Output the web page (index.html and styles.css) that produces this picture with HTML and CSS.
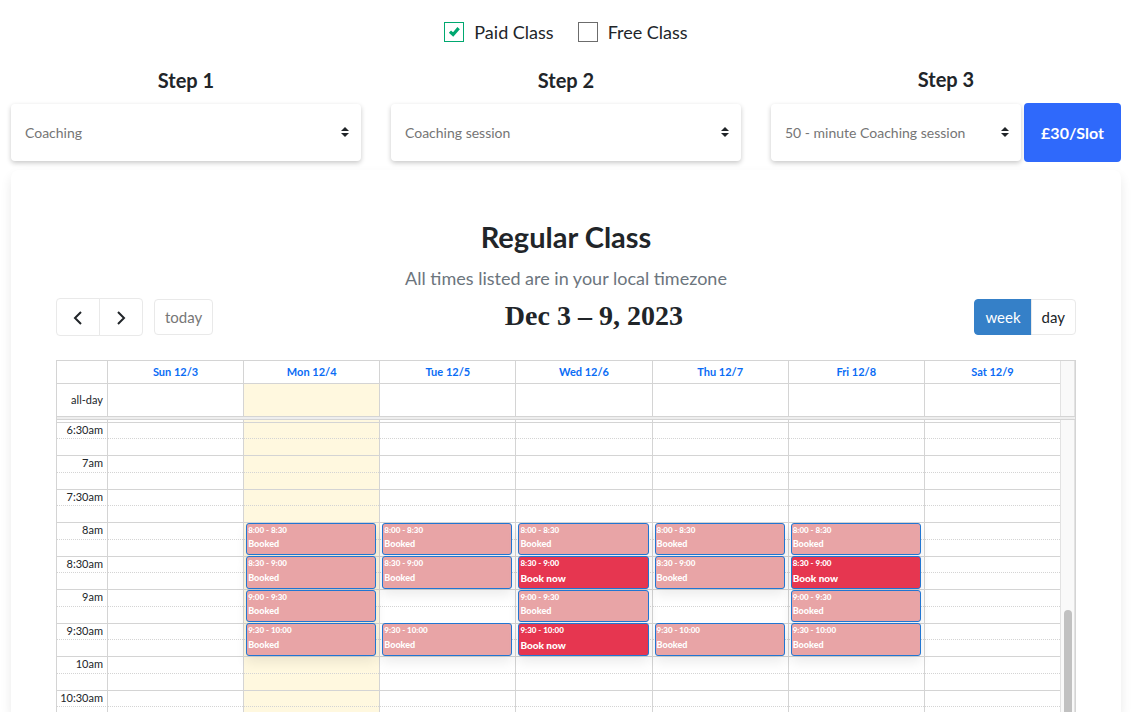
FILE: index.html
```html
<!DOCTYPE html>
<html lang="en">
<head>
<meta charset="utf-8">
<meta name="viewport" content="width=device-width, initial-scale=1">
<title>Regular Class</title>
<link rel="stylesheet" href="styles.css">
</head>
<body>
<form class="booking">
    <div class="class-type">
        <label><input type="checkbox" name="paid" checked>Paid Class</label>
        <label><input type="checkbox" name="free">Free Class</label>
    </div>
    <div class="steps">
        <div class="step">
            <label class="step-title" for="step1">Step 1</label>
            <div class="select-box">
                <select id="step1"><option>Coaching</option></select>
                <svg class="arrows" viewBox="0 0 8 10"><path d="M4 0 8 4H0zM4 10 0 6h8z"/></svg>
            </div>
        </div>
        <div class="step">
            <label class="step-title" for="step2">Step 2</label>
            <div class="select-box">
                <select id="step2"><option>Coaching session</option></select>
                <svg class="arrows" viewBox="0 0 8 10"><path d="M4 0 8 4H0zM4 10 0 6h8z"/></svg>
            </div>
        </div>
        <div class="step">
            <label class="step-title" for="step3">Step 3</label>
            <div class="step-row">
                <div class="select-box">
                    <select id="step3"><option>50 - minute Coaching session</option></select>
                    <svg class="arrows" viewBox="0 0 8 10"><path d="M4 0 8 4H0zM4 10 0 6h8z"/></svg>
                </div>
                <button type="button" class="price">£30/Slot</button>
            </div>
        </div>
    </div>
</form>
<main class="card">
    <h1>Regular Class</h1>
    <p class="note">All times listed are in your local timezone</p>
    <div class="toolbar">
        <div class="toolbar-left">
            <div class="nav-group">
                <button type="button" aria-label="prev"><svg viewBox="0 0 14 14"><path d="M10 1 4 7l6 6"/></svg></button>
                <button type="button" aria-label="next"><svg viewBox="0 0 14 14"><path d="M4 1l6 6-6 6"/></svg></button>
            </div>
            <button type="button" class="today-btn" disabled>today</button>
        </div>
        <h2>Dec 3 – 9, 2023</h2>
        <div class="view-group">
            <button type="button" class="active">week</button>
            <button type="button">day</button>
        </div>
    </div>
    <div class="calendar">
        <div class="pane">
            <table class="head">
                <tr>
                    <th class="axis"></th>
                    <th><a href="#sun">Sun 12/3</a></th>
                    <th><a href="#mon">Mon 12/4</a></th>
                    <th><a href="#tue">Tue 12/5</a></th>
                    <th><a href="#wed">Wed 12/6</a></th>
                    <th><a href="#thu">Thu 12/7</a></th>
                    <th><a href="#fri">Fri 12/8</a></th>
                    <th><a href="#sat">Sat 12/9</a></th>
                </tr>
                <tr class="all-day">
                    <td class="axis">all-day</td>
                    <td></td><td class="today"></td><td></td><td></td><td></td><td></td><td></td>
                </tr>
            </table>
            <div class="gutter"></div>
        </div>
        <div class="divider"></div>
        <div class="pane scroller">
            <table class="slots">
                <thead>
                    <tr>
                        <td class="axis"></td>
                        <td></td><td class="today"></td><td></td><td></td><td></td><td></td><td></td>
                    </tr>
                </thead>
                <tbody>
                    <tr>
                        <td class="axis">6:30am</td>
                        <td></td><td class="today"></td><td></td><td></td><td></td><td></td><td></td>
                    </tr>
                    <tr>
                        <td class="axis">7am</td>
                        <td></td><td class="today"></td><td></td><td></td><td></td><td></td><td></td>
                    </tr>
                    <tr>
                        <td class="axis">7:30am</td>
                        <td></td><td class="today"></td><td></td><td></td><td></td><td></td><td></td>
                    </tr>
                    <tr>
                        <td class="axis">8am</td>
                        <td></td>
                        <td class="today"><button class="event"><span>8:00 - 8:30</span>Booked</button></td>
                        <td><button class="event"><span>8:00 - 8:30</span>Booked</button></td>
                        <td><button class="event"><span>8:00 - 8:30</span>Booked</button></td>
                        <td><button class="event"><span>8:00 - 8:30</span>Booked</button></td>
                        <td><button class="event"><span>8:00 - 8:30</span>Booked</button></td>
                        <td></td>
                    </tr>
                    <tr>
                        <td class="axis">8:30am</td>
                        <td></td>
                        <td class="today"><button class="event"><span>8:30 - 9:00</span>Booked</button></td>
                        <td><button class="event"><span>8:30 - 9:00</span>Booked</button></td>
                        <td><button class="event open"><span>8:30 - 9:00</span>Book now</button></td>
                        <td><button class="event"><span>8:30 - 9:00</span>Booked</button></td>
                        <td><button class="event open"><span>8:30 - 9:00</span>Book now</button></td>
                        <td></td>
                    </tr>
                    <tr>
                        <td class="axis">9am</td>
                        <td></td>
                        <td class="today"><button class="event"><span>9:00 - 9:30</span>Booked</button></td>
                        <td></td>
                        <td><button class="event"><span>9:00 - 9:30</span>Booked</button></td>
                        <td></td>
                        <td><button class="event"><span>9:00 - 9:30</span>Booked</button></td>
                        <td></td>
                    </tr>
                    <tr>
                        <td class="axis">9:30am</td>
                        <td></td>
                        <td class="today"><button class="event"><span>9:30 - 10:00</span>Booked</button></td>
                        <td><button class="event"><span>9:30 - 10:00</span>Booked</button></td>
                        <td><button class="event open"><span>9:30 - 10:00</span>Book now</button></td>
                        <td><button class="event"><span>9:30 - 10:00</span>Booked</button></td>
                        <td><button class="event"><span>9:30 - 10:00</span>Booked</button></td>
                        <td></td>
                    </tr>
                    <tr>
                        <td class="axis">10am</td>
                        <td></td><td class="today"></td><td></td><td></td><td></td><td></td><td></td>
                    </tr>
                    <tr>
                        <td class="axis">10:30am</td>
                        <td></td><td class="today"></td><td></td><td></td><td></td><td></td><td></td>
                    </tr>
                </tbody>
            </table>
            <div class="gutter"><div class="thumb"></div></div>
        </div>
    </div>
</main>
</body>
</html>
```

FILE: styles.css
```css
* {
    box-sizing: border-box;
}

body {
    display: flex;
    flex-direction: column;
    height: 100vh;
    margin: 0;
    padding: 19px 11px 0;
    overflow: hidden;
    background: #fff;
    color: #212529;
    font-family: Lato, "Liberation Sans", sans-serif;
}

button, select {
    font-family: inherit;
    color: inherit;
}

/* class type and steps */
.class-type {
    display: flex;
    justify-content: center;
    gap: 24px;
    font-size: 18px;
    line-height: 26px;
}

.class-type label {
    display: flex;
    align-items: center;
    gap: 10px;
}

.class-type input {
    appearance: none;
    display: grid;
    place-items: center;
    width: 20px;
    height: 20px;
    margin: 0;
    border: 1px solid #6c6c6c;
    background: #fff;
}

.class-type input:checked {
    border-color: #00a870;
}

.class-type input:checked::before {
    content: "";
    width: 11px;
    height: 10px;
    background: #00a870;
    clip-path: polygon(0 58%, 20% 36%, 38% 52%, 78% 0, 100% 22%, 40% 98%);
}

.steps {
    display: grid;
    grid-template-columns: repeat(3, 1fr);
    align-items: center;
    gap: 30px;
    margin-top: 20px;
}

.step-title {
    display: block;
    margin-bottom: 10px;
    font-size: 20px;
    font-weight: 700;
    line-height: 28px;
    text-align: center;
}

.step-row {
    display: flex;
    align-items: center;
    gap: 3px;
}

.select-box {
    position: relative;
    flex: 1;
}

.select-box select {
    appearance: none;
    display: block;
    width: 100%;
    height: 57px;
    padding: 0 30px 0 14px;
    border: 0;
    border-radius: 4px;
    background: #fff;
    box-shadow: 0 2px 5px rgba(0, 0, 0, 0.22);
    color: #757575;
    font-size: 14px;
}

.arrows {
    position: absolute;
    top: 23px;
    right: 12px;
    width: 8px;
    height: 10px;
    fill: #212529;
    pointer-events: none;
}

.price {
    height: 59px;
    padding: 0 17px;
    border: 0;
    border-radius: 4px;
    background: #2f69fb;
    color: #fff;
    font-size: 16px;
    font-weight: 700;
}

/* calendar card */
.card {
    display: flex;
    flex-direction: column;
    flex: 1;
    min-height: 0;
    margin-top: 8px;
    padding: 49px 45px 0;
    border-radius: 8px 8px 0 0;
    background: #fff;
    box-shadow: 0 6px 12px rgba(0, 0, 0, 0.09);
}

h1 {
    margin: 0;
    font-size: 29px;
    line-height: 36px;
    text-align: center;
}

.note {
    margin: 10px 0 7px;
    color: #6c757d;
    font-size: 18px;
    line-height: 26px;
    text-align: center;
}

.toolbar {
    display: flex;
    justify-content: space-between;
    align-items: center;
    margin-bottom: 24px;
}

.toolbar h2 {
    margin: 0 0 2px;
    font-family: "Liberation Serif", serif;
    font-size: 28px;
    line-height: 36px;
}

.toolbar-left {
    display: flex;
    align-items: center;
    gap: 11px;
}

.toolbar button {
    height: 36px;
    padding: 0 10px;
    border: 1px solid #e9e9e9;
    border-radius: 4px;
    background: #fff;
    font-size: 15px;
}

.nav-group, .view-group {
    display: flex;
}

.toolbar .nav-group button {
    width: 44px;
    height: 38px;
    padding: 0;
}

.toolbar .nav-group button:first-child, .toolbar .view-group button:first-child {
    border-radius: 4px 0 0 4px;
}

.toolbar .nav-group button:last-child, .toolbar .view-group button:last-child {
    margin-left: -1px;
    border-radius: 0 4px 4px 0;
}

.nav-group svg {
    display: block;
    width: 14px;
    height: 14px;
    margin: 2px auto 0;
    fill: none;
    stroke: #212529;
    stroke-width: 2;
}

.toolbar .today-btn {
    color: #777;
}

.toolbar .active {
    border-color: #3580c8;
    background: #3580c8;
    color: #fff;
}

.calendar {
    display: flex;
    flex-direction: column;
    flex: 1;
    min-height: 0;
    border: 1px solid #d4d4d4;
    border-bottom: 0;
    font-size: 11px;
}

.pane {
    display: grid;
    grid-template-columns: 1fr 15px;
}

.scroller {
    flex: 1;
    min-height: 0;
    overflow: hidden;
}

table {
    align-self: start;
    width: 100%;
    table-layout: fixed;
    border-spacing: 0;
}

th, td {
    padding: 0;
    border-left: 1px solid #d4d4d4;
}

.axis {
    width: 50px;
    padding-right: 4px;
    border-left: 0;
    text-align: right;
}

.head th {
    height: 22px;
    line-height: 14px;
}

.head a {
    color: #0a6cf5;
    text-decoration: none;
}

.all-day td {
    height: 33px;
    padding-bottom: 2px;
    border-top: 1px solid #d4d4d4;
}

.today {
    background-color: #fff8df;
}

.divider {
    height: 4px;
    border: 1px solid #d4d4d4;
    border-width: 1px 0;
    background: #eee;
}

.slots thead td {
    height: 2px;
}

.slots tbody td {
    height: 33px;
    border-top: 1px solid #d4d4d4;
    background-image: repeating-linear-gradient(to right, #d4d4d4 0 1px, transparent 1px 2px);
    background-position: 0 15px;
    background-repeat: no-repeat;
    background-size: 100% 1px;
    vertical-align: top;
}

.slots tbody tr:nth-child(even) td {
    height: 34px;
    background-position: 0 16px;
}

.slots tbody .axis {
    line-height: 14px;
}

.event {
    position: relative;
    display: flex;
    flex-direction: column;
    justify-content: space-between;
    width: calc(100% - 5px);
    height: 32px;
    margin: 0 0 0 2px;
    padding: 1px 1px 3px;
    border: 1px solid #2176d2;
    border-radius: 3px;
    background: #e8a4a6;
    box-shadow: 0 6px 12px rgba(0, 0, 0, 0.08);
    color: #fff;
    font-size: 9px;
    font-weight: 900;
    line-height: 14px;
    text-align: left;
}

.event span {
    font-size: 8px;
    line-height: 10px;
}

.slots tr:nth-child(odd) .event {
    height: 33px;
    margin-top: -1px;
}

.event.open {
    background: #e63650;
    font-size: 10px;
}

.gutter {
    display: flex;
    justify-content: center;
    border: 1px solid #e2e2e2;
    border-width: 0 1px;
    background: #f9f9f9;
}

.thumb {
    width: 8px;
    height: 500px;
    margin-top: 190px;
    border-radius: 4px;
    background: #c1c1c1;
}
```
